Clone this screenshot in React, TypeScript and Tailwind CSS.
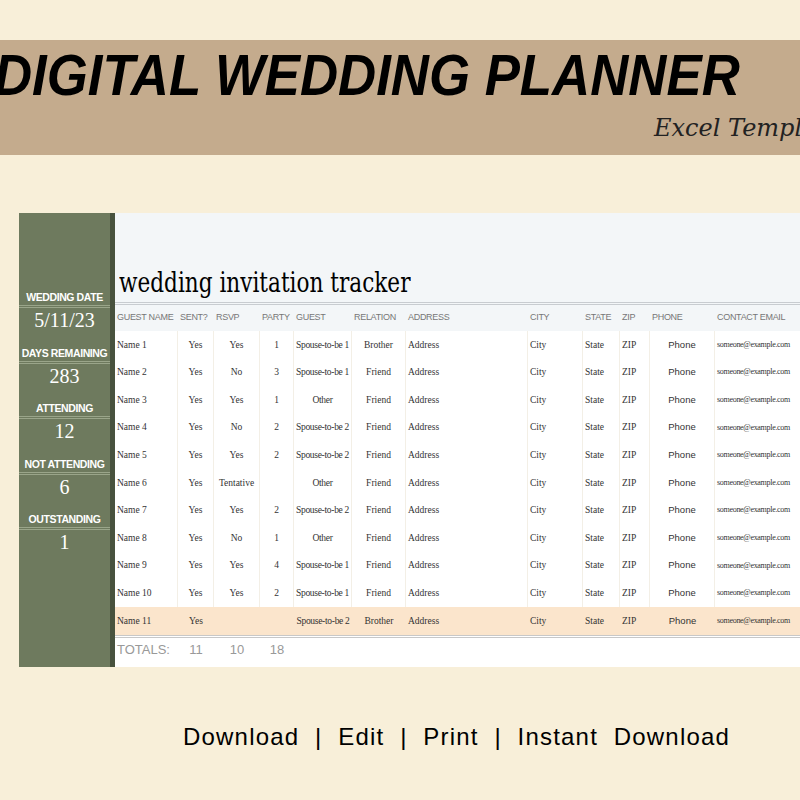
import React from "react";

const cols = [63, 36, 46, 34, 58, 54, 122, 55, 37, 30, 65, 90];
const heads = ["GUEST NAME","SENT?","RSVP","PARTY","GUEST","RELATION","ADDRESS","CITY","STATE","ZIP","PHONE","CONTACT EMAIL"];
const align = ["left","center","center","center","center","center","left","left","left","left","center","left"];
const rows = [
  ["Name 1","Yes","Yes","1","Spouse-to-be 1","Brother"],
  ["Name 2","Yes","No","3","Spouse-to-be 1","Friend"],
  ["Name 3","Yes","Yes","1","Other","Friend"],
  ["Name 4","Yes","No","2","Spouse-to-be 2","Friend"],
  ["Name 5","Yes","Yes","2","Spouse-to-be 2","Friend"],
  ["Name 6","Yes","Tentative","","Other","Friend"],
  ["Name 7","Yes","Yes","2","Spouse-to-be 2","Friend"],
  ["Name 8","Yes","No","1","Other","Friend"],
  ["Name 9","Yes","Yes","4","Spouse-to-be 1","Friend"],
  ["Name 10","Yes","Yes","2","Spouse-to-be 1","Friend"],
  ["Name 11","Yes","","","Spouse-to-be 2","Brother"],
];
const stats = [["WEDDING DATE","5/11/23"],["DAYS REMAINING","283"],["ATTENDING","12"],["NOT ATTENDING","6"],["OUTSTANDING","1"]];

export default function App() {
  return (
    <div className="w-[800px] h-[800px] bg-[#f8efd9] overflow-hidden relative" style={{fontFamily:"'Liberation Sans', sans-serif"}}>
      <div className="h-[40px]" />
      <div className="h-[115px] bg-[#c4ab8d] relative overflow-hidden">
        <div className="absolute left-[-6px] top-[6px] text-[58px] font-bold italic text-black leading-none whitespace-nowrap" style={{transform:"scaleX(0.91)",transformOrigin:"left"}}>DIGITAL WEDDING PLANNER</div>
        <div className="absolute left-[654px] top-[70px] text-[24px] italic text-[#222] whitespace-nowrap" style={{fontFamily:"'DejaVu Serif', serif", fontWeight:300}}>Excel Template</div>
      </div>
      <div className="h-[58px]" />
      <div className="ml-[19px] h-[454px] flex">
        <div className="w-[91px] bg-[#6e7a5e] flex flex-col pt-[77px]">
          {stats.map(([l,v]) => (
            <div key={l} className="h-[55.5px] flex flex-col items-center">
              <div className="text-white font-bold text-[10.5px] tracking-[-0.4px] whitespace-nowrap leading-[14px] w-full text-center border-b-[3px] border-double border-[#9aa58a] pb-[1px]">{l}</div>
              <div className="text-white text-[20px] leading-[24px]" style={{fontFamily:"'Liberation Serif', serif"}}>{v}</div>
            </div>
          ))}
        </div>
        <div className="w-[5px] bg-[#48523e]" />
        <div className="flex-1 overflow-hidden bg-white flex flex-col">
          <div className="h-[92px] bg-[#f3f6f8] flex items-end pl-[4px] pb-[6px] border-b-[3px] border-double border-[#c8ccd0]">
            <div className="text-[27px] leading-none text-black whitespace-nowrap" style={{fontFamily:"'DejaVu Serif', serif", transform:"scaleX(0.8)", transformOrigin:"left"}}>wedding invitation tracker</div>
          </div>
          <div className="flex h-[26px] items-center bg-[#f3f6f8] text-[9px] tracking-[-0.3px] text-[#777] whitespace-nowrap">
            {heads.map((h,i) => <div key={h} className="pl-[2px] shrink-0 overflow-hidden" style={{width:cols[i]}}>{h}</div>)}
          </div>
          {rows.map((r, ri) => {
            const cells = [...r, "Address","City","State","ZIP","Phone","someone@example.com"];
            const last = ri === 10;
            return (
              <div key={ri} className={`flex h-[27.6px] items-center whitespace-nowrap text-[9.5px] text-[#333] ${last ? "bg-[#fbe5cc]" : ""}`}>
                {cells.map((c, i) => (
                  <div key={i} className={`shrink-0 h-full flex items-center px-[2px] ${last ? "" : "border-r border-[#f3efe6]"} ${align[i]==="center" ? "justify-center" : ""}`} style={{width:cols[i], fontFamily: i===10 ? "'Liberation Sans', sans-serif" : "'Liberation Serif', serif", fontSize: i===11 ? 8 : undefined, letterSpacing: i===4 || i===11 ? "-0.3px" : undefined}}>{c}</div>
                ))}
              </div>
            );
          })}
          <div className="border-t-[3px] border-double border-[#c8c8c8] flex items-center h-[27px] text-[13px] text-[#999]">
            <div className="w-[63px] pl-[2px]">TOTALS:</div>
            <div className="w-[36px] text-center">11</div>
            <div className="w-[46px] text-center">10</div>
            <div className="w-[34px] text-center">18</div>
          </div>
        </div>
      </div>
      <div className="mt-[52px] pl-[183px] text-[24px] text-black whitespace-nowrap tracking-[1.2px]" style={{fontFamily:"'Liberation Sans', sans-serif"}}>Download&nbsp;&nbsp;|&nbsp;&nbsp;Edit&nbsp;&nbsp;|&nbsp;&nbsp;Print&nbsp;&nbsp;|&nbsp;&nbsp;Instant&nbsp;&nbsp;Download</div>
    </div>
  );
}
